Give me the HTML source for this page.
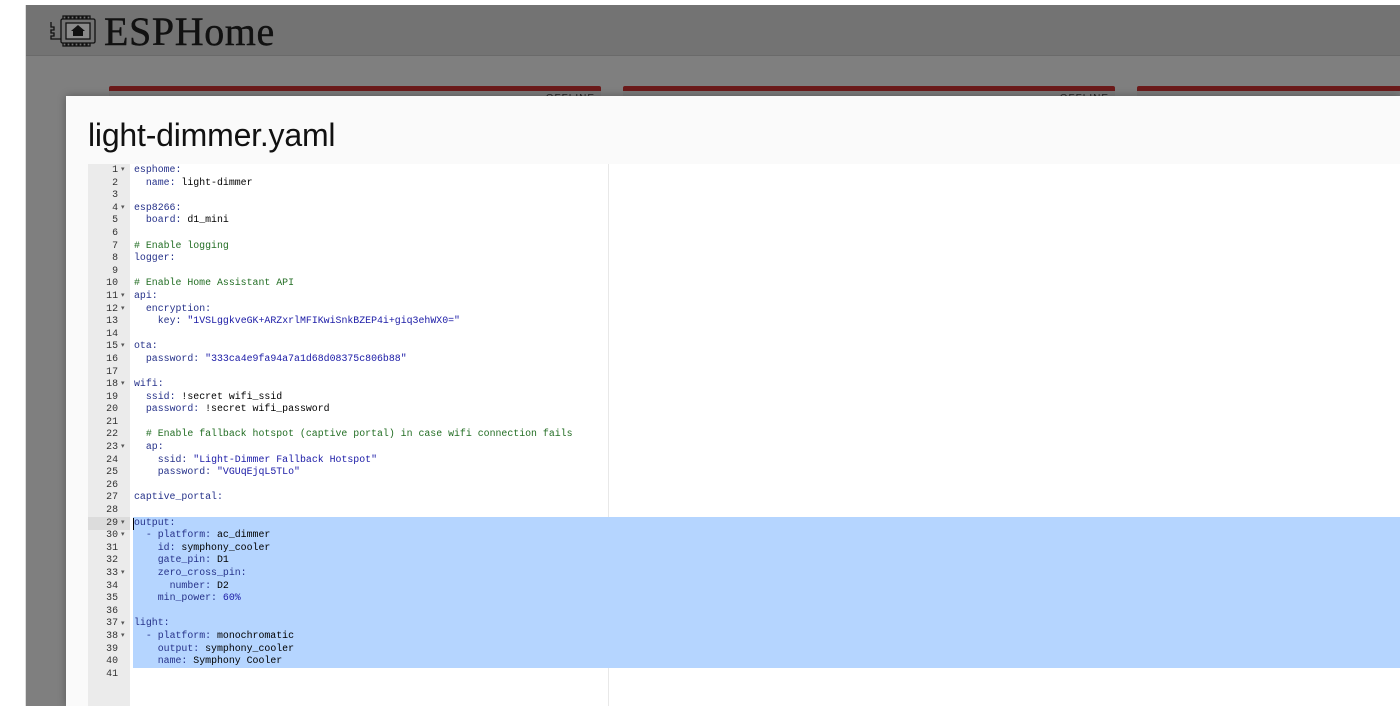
<!DOCTYPE html>
<html><head><meta charset="utf-8">
<style>
html,body{margin:0;padding:0;width:1400px;height:706px;overflow:hidden;background:#fff;font-family:"Liberation Sans",sans-serif}
#app{position:absolute;left:25px;top:5px;right:0;bottom:0;background:#7f7f7f;border-left:1px solid #ddd}
#hdr{position:absolute;left:0;top:0;right:0;height:50px;background:#737373;border-bottom:1px solid #6a6a6a}
#logo{position:absolute;left:22px;top:8px}
#title{position:absolute;left:78px;top:3px;font-family:"Liberation Serif",serif;font-size:40px;color:#111;letter-spacing:0.6px;-webkit-text-stroke:0.4px #111}
.card{position:absolute;top:81px;height:40px;background:#7a7a7a;border-top:5px solid #6b1a1a;border-radius:2px}
.card span{position:absolute;right:6px;top:2px;font-size:10px;color:#222;letter-spacing:1px}
#modal{position:absolute;left:66px;top:96px;right:0;bottom:0;background:#fafafa;box-shadow:0 0 8px rgba(0,0,0,.3)}
#mt{position:absolute;left:22px;top:21px;font-size:32px;color:#111;font-weight:300;letter-spacing:-0.2px}
#ed{position:absolute;left:88px;top:164px;right:0;bottom:0;background:#fff}
#gut{position:absolute;left:0;top:0;width:42px;bottom:0;background:#ebebeb}
#sel{position:absolute;left:45px;right:0;top:353px;height:151px;background:#b5d5ff}
#act{position:absolute;left:0;width:42px;top:353px;height:12.6px;background:#dcdcdc}
#pm{position:absolute;left:520px;top:0;bottom:0;width:1px;background:#e8e8e8}
.ln,.code{position:absolute;top:0;font-family:"Liberation Mono",monospace;font-size:9.9px;line-height:12.6px;white-space:pre}
.ln{left:0;width:30px;text-align:right;color:#333}
.fd{position:absolute;left:33px;font-size:7px;color:#555;line-height:12.6px}
.code{left:46px;color:#000}
.k{color:#26328a}.s{color:#1a1aa6}.c{color:#236e24}
#cur{position:absolute;left:45px;top:354px;width:1px;height:12px;background:#000}
</style></head><body>
<div id="app">
<div id="hdr">
<svg id="logo" width="52" height="36" viewBox="0 0 52 36">
<g fill="none" stroke="#111" stroke-width="1.3">
<rect x="13" y="6" width="34" height="24" rx="1.5"/>
<rect x="18" y="10" width="24" height="16" fill="#8a8a8a"/>
<path d="M15 6 v-3 h3 v3 M19 6 v-3 h3 v3 M23 6 v-3 h3 v3 M27 6 v-3 h3 v3 M31 6 v-3 h3 v3 M35 6 v-3 h3 v3 M39 6 v-3 h3 v3"/>
<path d="M15 30 v3 h3 v-3 M19 30 v3 h3 v-3 M23 30 v3 h3 v-3 M27 30 v3 h3 v-3 M31 30 v3 h3 v-3 M35 30 v3 h3 v-3 M39 30 v3 h3 v-3"/>
<path d="M13 26 h-10 v-3 h3 v-3 h-3 v-3 h3 v-3 h-3 v-5"/>
</g>
<path d="M30 12 l-7 6 h2 v5 h10 v-5 h2 z" fill="#111"/>
</svg>
<div id="title">ESPHome</div>
</div>
<div class="card" style="left:83px;width:492px"><span>OFFLINE</span></div>
<div class="card" style="left:597px;width:492px"><span>OFFLINE</span></div>
<div class="card" style="left:1111px;width:300px"></div>
</div>
<div id="modal"><div id="mt">light-dimmer.yaml</div></div>
<div id="ed">
<div id="gut"></div>
<div id="act"></div>
<div id="pm"></div>
<div id="sel"></div>
<div class="ln">1
2
3
4
5
6
7
8
9
10
11
12
13
14
15
16
17
18
19
20
21
22
23
24
25
26
27
28
29
30
31
32
33
34
35
36
37
38
39
40
41</div>
<div class="fd" style="top:0">▾</div>
<div class="fd" style="top:37.8px">▾</div>
<div class="fd" style="top:126px">▾</div>
<div class="fd" style="top:138.6px">▾</div>
<div class="fd" style="top:176.4px">▾</div>
<div class="fd" style="top:214.2px">▾</div>
<div class="fd" style="top:277.2px">▾</div>
<div class="fd" style="top:352.8px">▾</div>
<div class="fd" style="top:365.4px">▾</div>
<div class="fd" style="top:403.2px">▾</div>
<div class="fd" style="top:453.6px">▾</div>
<div class="fd" style="top:466.2px">▾</div>
<div class="code"><span class="k">esphome:</span>
  <span class="k">name:</span> light-dimmer

<span class="k">esp8266:</span>
  <span class="k">board:</span> d1_mini

<span class="c"># Enable logging</span>
<span class="k">logger:</span>

<span class="c"># Enable Home Assistant API</span>
<span class="k">api:</span>
  <span class="k">encryption:</span>
    <span class="k">key:</span> <span class="s">"1VSLggkveGK+ARZxrlMFIKwiSnkBZEP4i+giq3ehWX0="</span>

<span class="k">ota:</span>
  <span class="k">password:</span> <span class="s">"333ca4e9fa94a7a1d68d08375c806b88"</span>

<span class="k">wifi:</span>
  <span class="k">ssid:</span> !secret wifi_ssid
  <span class="k">password:</span> !secret wifi_password

  <span class="c"># Enable fallback hotspot (captive portal) in case wifi connection fails</span>
  <span class="k">ap:</span>
    <span class="k">ssid:</span> <span class="s">"Light-Dimmer Fallback Hotspot"</span>
    <span class="k">password:</span> <span class="s">"VGUqEjqL5TLo"</span>

<span class="k">captive_portal:</span>

<span class="k">output:</span>
  <span class="k">- platform:</span> ac_dimmer
    <span class="k">id:</span> symphony_cooler
    <span class="k">gate_pin:</span> D1
    <span class="k">zero_cross_pin:</span>
      <span class="k">number:</span> D2
    <span class="k">min_power:</span> <span class="s">60%</span>

<span class="k">light:</span>
  <span class="k">- platform:</span> monochromatic
    <span class="k">output:</span> symphony_cooler
    <span class="k">name:</span> Symphony Cooler
</div>
<div id="cur"></div>
</div>
</body></html>
